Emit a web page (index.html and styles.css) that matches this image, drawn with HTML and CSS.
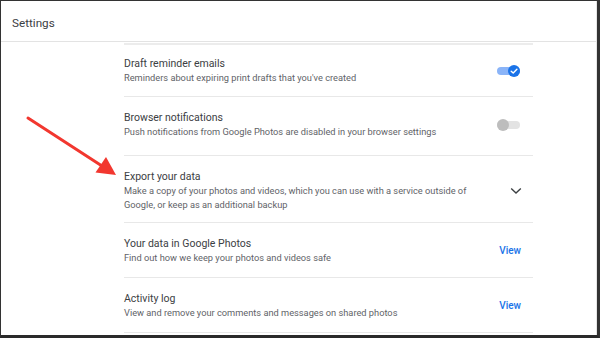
FILE: index.html
```html
<!DOCTYPE html>
<html>
<head>
<meta charset="utf-8">
<link rel="stylesheet" href="styles.css">
</head>
<body>
<div class="frame">
  <div class="inner">
    <header class="header">Settings</header>
    <div class="list">
      <div class="row row-a">
        <div class="text">
          <div class="title">Draft reminder emails</div>
          <div class="sub">Reminders about expiring print drafts that you've created</div>
        </div>
        <div class="action">
          <span class="toggle on"><span class="track"></span><span class="thumb"><svg width="12" height="12" viewBox="0 0 12 12"><path d="M3.2 6.2 L5.2 8.1 L8.9 4.2" fill="none" stroke="#fff" stroke-width="1.4" stroke-linecap="round" stroke-linejoin="round"/></svg></span></span>
        </div>
      </div>
      <div class="row row-b">
        <div class="text">
          <div class="title">Browser notifications</div>
          <div class="sub">Push notifications from Google Photos are disabled in your browser settings</div>
        </div>
        <div class="action">
          <span class="toggle off"><span class="track"></span><span class="thumb"></span></span>
        </div>
      </div>
      <div class="row row-c">
        <div class="text">
          <div class="title">Export your data</div>
          <div class="sub">Make a copy of your photos and videos, which you can use with a service outside of<br>Google, or keep as an additional backup</div>
        </div>
        <div class="action">
          <svg class="chev" width="12" height="8" viewBox="0 0 12 8"><path d="M1.2 1.5 L6 6 L10.8 1.5" fill="none" stroke="#3c4043" stroke-width="1.4"/></svg>
        </div>
      </div>
      <div class="row">
        <div class="text">
          <div class="title">Your data in Google Photos</div>
          <div class="sub">Find out how we keep your photos and videos safe</div>
        </div>
        <div class="action"><span class="view">View</span></div>
      </div>
      <div class="row">
        <div class="text">
          <div class="title">Activity log</div>
          <div class="sub">View and remove your comments and messages on shared photos</div>
        </div>
        <div class="action"><span class="view">View</span></div>
      </div>
    </div>
  </div>
  <svg class="arrow" width="600" height="338" viewBox="0 0 600 338">
    <line x1="28" y1="118" x2="102" y2="166" stroke="#f2372f" stroke-width="3" stroke-linecap="round"/>
    <polygon points="116,175 95.5,172.5 106,157" fill="#f2372f"/>
  </svg>
</div>
</body>
</html>
```

FILE: styles.css
```css
* { box-sizing: border-box; }
html, body { margin: 0; padding: 0; background: #fff; }
body { font-family: Roboto, "Noto Sans", Arial, sans-serif; }

.frame {
  position: relative;
  width: 600px;
  height: 338px;
  border-top: 1px solid #333;
  border-left: 1px solid #333;
  border-right: 3px solid #333;
  border-bottom: 3px solid #2a2a2a;
  overflow: hidden;
}

.inner {
  height: 100%;
  border-right: 1px solid #e6e6e6;
}

.header {
  height: 41px;
  padding-left: 11px;
  padding-top: 3px;
  display: flex;
  align-items: center;
  font-size: 11.7px;
  color: #3c4043;
  border-bottom: 1px solid #e3e3e3;
}

.list {
  margin-top: 1px;
  margin-left: 123px;
  width: 409px;
  border-top: 2px solid #ececec;
}

.row {
  display: flex;
  align-items: center;
  padding: 13px 12px 12px 0;
  border-bottom: 1px solid #e8e8e8;
}
.row-a { padding-top: 11px; padding-bottom: 11px; }
.row-b { padding-bottom: 16px; }
.row-c { padding-bottom: 10px; }

.text { flex: 1; }
.title {
  font-size: 10.5px;
  line-height: 15px;
  color: #3c4043;
}
.sub {
  font-size: 9.25px;
  line-height: 14px;
  color: #5f6368;
}

.action {
  width: 40px;
  display: flex;
  justify-content: flex-end;
  align-items: center;
}

.toggle {
  position: relative;
  display: inline-block;
  width: 24px;
  height: 14px;
}
.toggle .track {
  position: absolute;
  left: 0;
  top: 3px;
  width: 23px;
  height: 8px;
  border-radius: 4px;
}
.toggle .thumb {
  position: absolute;
  top: 1px;
  width: 12px;
  height: 12px;
  border-radius: 50%;
  display: flex;
}
.toggle.on .track { background: #8ab4f8; }
.toggle.on .thumb { left: 11px; background: #1a73e8; }
.toggle.off .track { background: #e3e3e3; }
.toggle.off .thumb { left: 0; background: #bdbdbd; }

.chev { display: block; margin-right: -1px; }

.view {
  font-size: 10px;
  font-weight: 500;
  color: #1a73e8;
}

.arrow {
  position: absolute;
  left: -1px;
  top: -1px;
  pointer-events: none;
}
```
